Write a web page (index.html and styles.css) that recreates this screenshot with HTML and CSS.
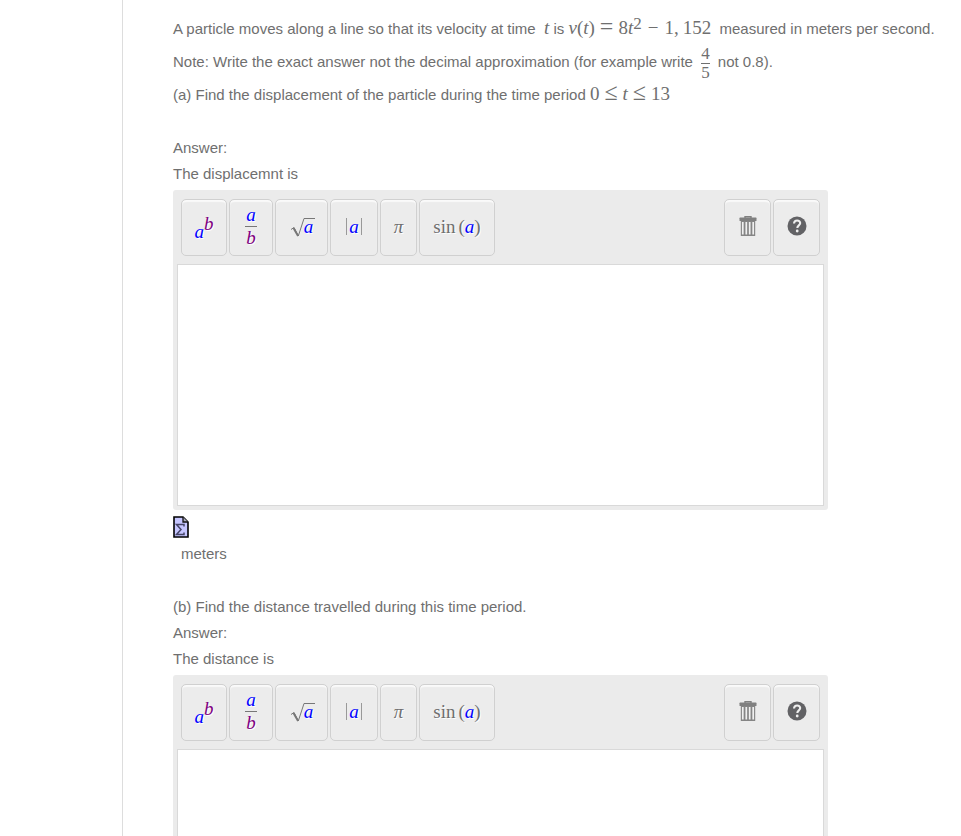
FILE: index.html
```html
<!DOCTYPE html>
<html lang="en">
<head>
  <meta charset="UTF-8" />
  <meta name="viewport" content="width=device-width, initial-scale=1.0" />
  <title>Particle Motion Question</title>
  <link rel="stylesheet" href="styles.css">
</head>
<body>

  <!-- Shared icons -->
  <svg class="sprite" aria-hidden="true">
    <symbol id="icon-trash" viewBox="0 0 18 20">
      <path d="M6 2V0.7h6V2" fill="none" stroke="#808080" stroke-width="1.4" />
      <rect x="0.5" y="1.6" width="17" height="3.4" rx="0.6" fill="#808080" />
      <path d="M1.8 5h14.4v15H1.8z" fill="#858585" />
      <path d="M3.8 6v12.4M7.3 6v12.4M10.7 6v12.4M14.2 6v12.4" stroke="#f0f0f0" stroke-width="1.7" />
    </symbol>
    <symbol id="icon-help" viewBox="0 0 20 20">
      <circle cx="10" cy="10" r="9.5" fill="#626265" />
      <path d="M7 7.5C7.2 5.4 8.4 4.5 10.1 4.5c1.9 0 3.1 1.1 3.1 2.6 0 2.2-2.9 2.4-2.9 4.9" fill="none" stroke="#eee" stroke-width="2.1" />
      <circle cx="10.2" cy="15" r="1.4" fill="#eee" />
    </symbol>
    <symbol id="icon-root" viewBox="0 0 26 20">
      <path d="M1 12.5l3-2 4.3 8.5L14 1.5h11" fill="none" stroke="#777" stroke-width="1" />
      <path d="M3.5 11l4.6 8" stroke="#777" stroke-width="2" />
    </symbol>
  </svg>

  <main class="question">
    <p>A particle moves along a line so that its velocity at time &nbsp;<span class="math"><i>t</i></span> is <span class="math"><i>v</i>(<i>t</i>)<span class="rel">=</span>8<i>t</i><sup>2</sup><span class="op">−</span>1,<span class="group">152</span></span> &nbsp;measured in meters per second.</p>
    <p class="tall">Note: Write the exact answer not the decimal approximation (for example write <span class="math frac"><span>4</span><span>5</span></span> not 0.8).</p>
    <p>(a) Find the displacement of the particle during the time period <span class="math">0<span class="rel">≤</span><i>t</i><span class="rel">≤</span>13</span></p>

    <section class="part">
      <p>Answer:</p>
      <p><label for="displacement">The displacemnt is</label></p>
      <div class="editor">
        <div class="toolbar">
          <button type="button" class="btn power" aria-label="Exponent"><i class="a">a</i><i class="b">b</i></button>
          <button type="button" class="btn fraction" aria-label="Fraction"><i class="a">a</i><i class="b">b</i></button>
          <button type="button" class="btn root" aria-label="Square root"><svg><use href="#icon-root" /></svg><i class="a">a</i></button>
          <button type="button" class="btn abs" aria-label="Absolute value"><span class="bars"><i class="a">a</i></span></button>
          <button type="button" class="btn pi" aria-label="Pi"><i>π</i></button>
          <button type="button" class="btn sine" aria-label="Sine">sin<span class="arg">(<i class="a">a</i>)</span></button>
          <button type="button" class="btn tool clear" aria-label="Clear"><svg><use href="#icon-trash" /></svg></button>
          <button type="button" class="btn tool" aria-label="Help"><svg><use href="#icon-help" /></svg></button>
        </div>
        <textarea id="displacement"></textarea>
      </div>
      <button type="button" class="preview" aria-label="Equation editor">
        <svg viewBox="0 0 16 22">
          <path d="M1 1h9l5 5v15H1z" fill="#c6c6ff" stroke="#000" stroke-width="1.6" />
          <path d="M10 1v5h5" fill="#aaaabc" stroke="#111" stroke-width="1.3" />
          <path d="M11 10.5V8.5H3.5l4.5 5-4.5 5H11v-2" fill="none" stroke="#454568" stroke-width="1.5" />
        </svg>
      </button>
      <p class="unit">meters</p>
    </section>

    <section class="part">
      <p>(b) Find the distance travelled during this time period.</p>
      <p>Answer:</p>
      <p><label for="distance">The distance is</label></p>
      <div class="editor">
        <div class="toolbar">
          <button type="button" class="btn power" aria-label="Exponent"><i class="a">a</i><i class="b">b</i></button>
          <button type="button" class="btn fraction" aria-label="Fraction"><i class="a">a</i><i class="b">b</i></button>
          <button type="button" class="btn root" aria-label="Square root"><svg><use href="#icon-root" /></svg><i class="a">a</i></button>
          <button type="button" class="btn abs" aria-label="Absolute value"><span class="bars"><i class="a">a</i></span></button>
          <button type="button" class="btn pi" aria-label="Pi"><i>π</i></button>
          <button type="button" class="btn sine" aria-label="Sine">sin<span class="arg">(<i class="a">a</i>)</span></button>
          <button type="button" class="btn tool clear" aria-label="Clear"><svg><use href="#icon-trash" /></svg></button>
          <button type="button" class="btn tool" aria-label="Help"><svg><use href="#icon-help" /></svg></button>
        </div>
        <textarea id="distance"></textarea>
      </div>
    </section>
  </main>

</body>
</html>
```
FILE: styles.css
```css
* {
  box-sizing: border-box;
}

body {
  margin: 0;
  background: #fff;
  color: #6f6f6f;
  font-family: "Liberation Sans", Arial, sans-serif;
  font-size: 15px;
  line-height: 26px;
}

.sprite {
  display: none;
}

.question {
  margin-left: 122px;
  padding: 16px 16px 16px 50px;
  border-left: 1px solid #ddd;
}

p {
  margin: 0;
}

.tall {
  line-height: 40px;
}

.part {
  margin-top: 27px;
}

/* Formulas */
.math {
  font-family: "Liberation Serif", "Times New Roman", serif;
  font-size: 19px;
  line-height: 1;
}

.math sup {
  font-size: 17px;
  line-height: 0;
  vertical-align: 5px;
}

.rel {
  margin: 0 5px;
  font-size: 24px;
  line-height: 0;
}

.op {
  margin: 0 6px;
}

.group {
  margin-left: 4px;
}

.frac {
  display: inline-flex;
  flex-direction: column;
  vertical-align: middle;
  margin: 0 4px;
  font-size: 17px;
  line-height: 18px;
}

.frac span + span {
  border-top: 1px solid #6f6f6f;
}

/* Equation editor */
.editor {
  max-width: 655px;
  margin-top: 3px;
  padding: 9px 4px 4px;
  background: #ebebeb;
  border-radius: 3px;
}

.toolbar {
  display: flex;
  gap: 2px;
  padding: 0 4px;
  margin-bottom: 8px;
}

.btn {
  display: flex;
  align-items: center;
  justify-content: center;
  height: 57px;
  padding: 0 12px 2px;
  border: 1px solid #d0d0d0;
  border-radius: 5px;
  background: #ececec;
  box-shadow: inset 0 2px 1px #fafafa;
  color: #6f6f6f;
  font-family: "Liberation Serif", "Times New Roman", serif;
  font-size: 19px;
  line-height: 22px;
  text-shadow: 1px 1px 0 #fff;
  cursor: pointer;
}

.btn:hover {
  background: #f5f5f5;
}

.a {
  color: #0000ff;
}

.b {
  color: #800080;
}

.power {
  width: 46px;
}

.power .a {
  padding-top: 10px;
}

.power .b {
  padding-bottom: 6px;
}

.fraction {
  flex-direction: column;
  width: 44px;
}

.fraction .b {
  padding: 0 1px;
  border-top: 1px solid #777;
}

.root {
  width: 53px;
}

.root svg {
  width: 26px;
  height: 20px;
  margin-right: -12px;
}

.abs {
  width: 48px;
}

.bars {
  padding: 0 2px;
  border: solid #999;
  border-width: 0 1px;
  line-height: 17px;
}

.pi {
  width: 37px;
}

.sine {
  width: 76px;
}

.arg {
  margin-left: 3px;
}

.tool {
  width: 47px;
  padding-bottom: 4px;
}

.tool svg {
  flex: none;
  width: 20px;
  height: 20px;
}

.clear {
  margin-left: auto;
}

textarea {
  display: block;
  width: 100%;
  height: 242px;
  padding: 8px;
  border: 1px solid #d9d9d9;
  background: #fff;
  font: inherit;
  resize: none;
}

.preview {
  display: block;
  width: 16px;
  height: 22px;
  margin: 6px 0 3px;
  padding: 0;
  border: 0;
  background: none;
  cursor: pointer;
}

.preview svg {
  display: block;
  width: 16px;
  height: 22px;
}

.unit {
  padding-left: 8px;
}
```
